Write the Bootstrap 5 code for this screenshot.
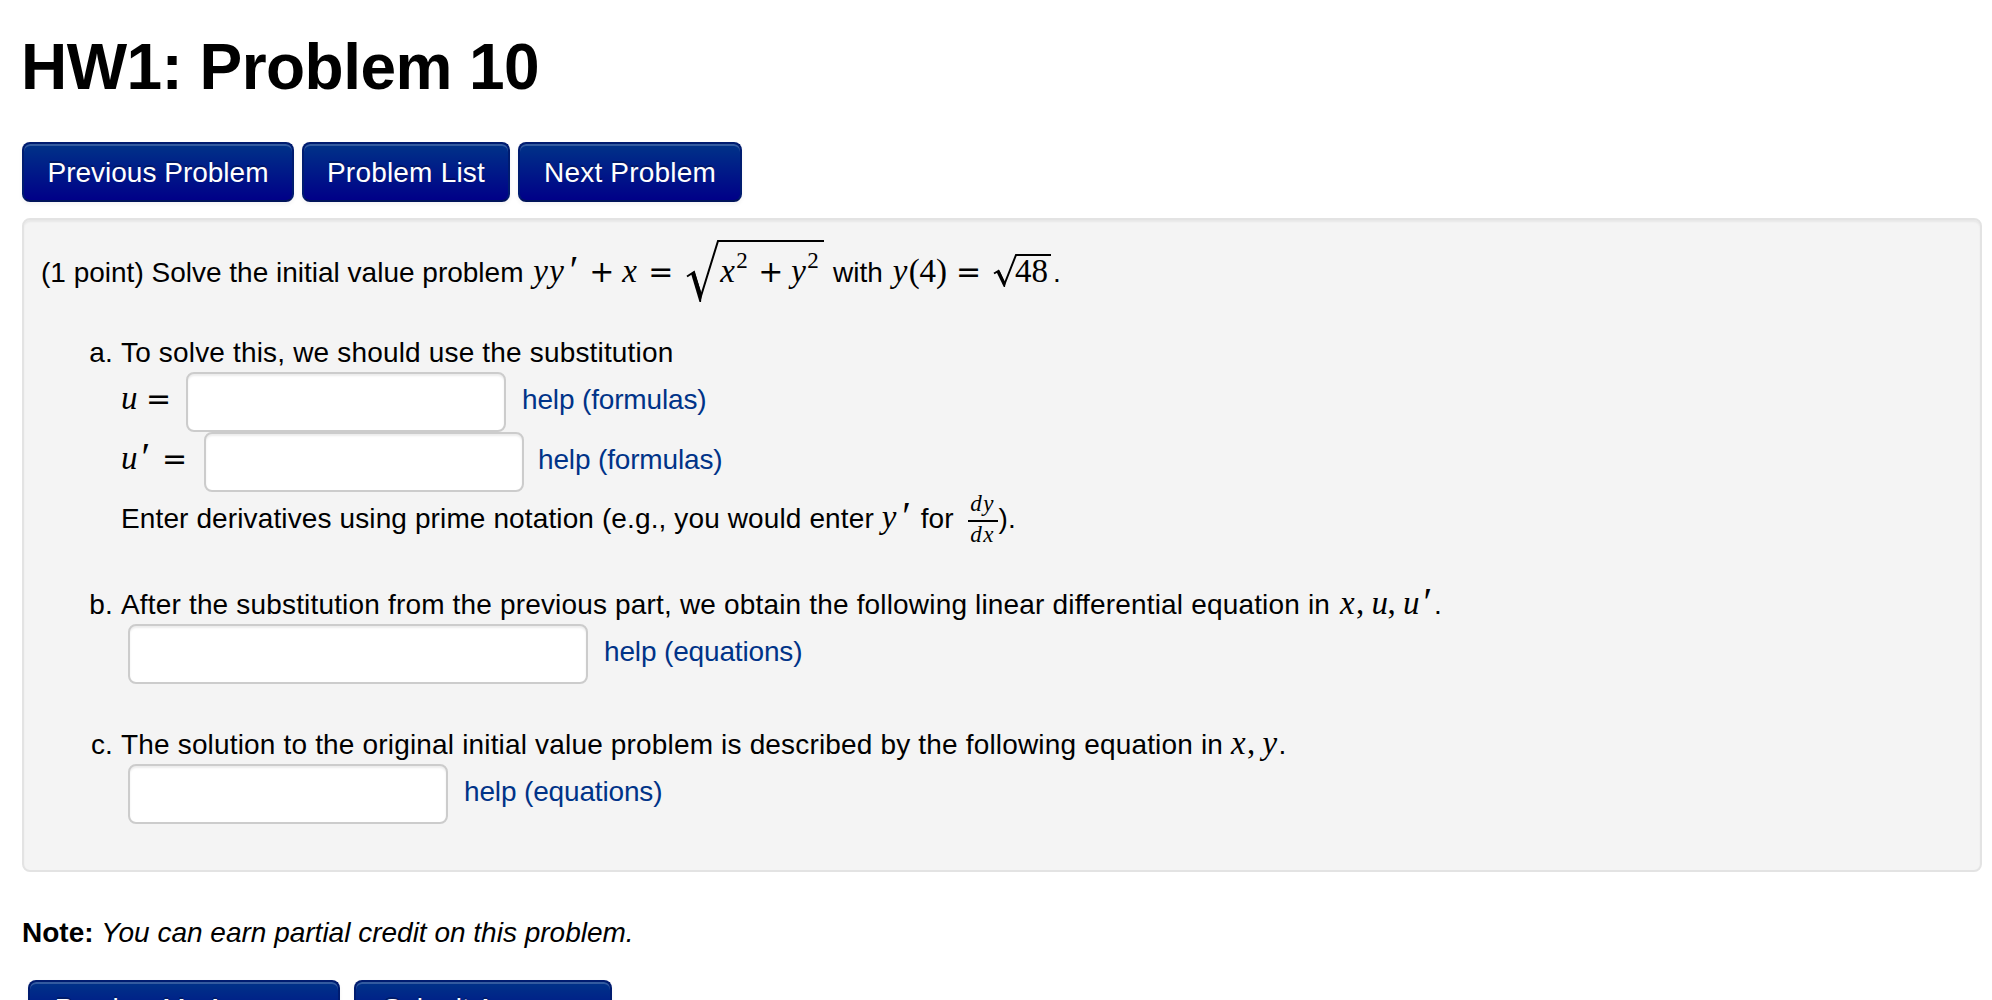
<!DOCTYPE html>
<html lang="en">
<head>
  <meta charset="utf-8">
  <title>HW1: Problem 10</title>
  <link rel="stylesheet" href="https://cdn.jsdelivr.net/npm/bootstrap@5.3.0/dist/css/bootstrap.min.css">
  <style>
    body {
      font-family: "Liberation Sans", Helvetica, Arial, sans-serif;
      font-size: 28px;
      line-height: 40px;
      color: #000;
      height: 1000px;
      overflow: hidden;
      padding: 27px 10px 0 22px;
      white-space: nowrap;
    }

    h1 {
      font-size: 64px;
      line-height: 80px;
      letter-spacing: -0.55px;
      margin: 0 0 35px -1px;
    }

    .btn-ww {
      height: 60px;
      padding: 9px 22px 7px;
      font-size: 28px;
      line-height: 40px;
      color: #fff;
      background: linear-gradient(#003388, #000088);
      border: 2px solid #001c70;
      border-bottom-color: #00145a;
      border-radius: 8px;
      box-shadow: inset 0 2px 0 rgba(255, 255, 255, 0.2), 0 2px 4px rgba(0, 0, 0, 0.05);
      text-shadow: 0 -2px 0 rgba(0, 0, 0, 0.25);
    }

    .btn-ww:hover {
      color: #fff;
      background: #000088;
    }

    .w-prev { width: 272px; }
    .w-list { width: 208px; letter-spacing: 0.2px; }
    .w-next { width: 224px; letter-spacing: 0.2px; }
    .w-preview { width: 312px; }
    .w-submit { width: 258px; }

    .problem {
      height: 654px;
      margin-top: 16px;
      padding: 33px 17px;
      background-color: #f4f4f4;
      border: 2px solid #e3e3e3;
      border-radius: 8px;
      box-shadow: inset 0 2px 2px rgba(0, 0, 0, 0.05);
    }

    .parts {
      list-style-type: lower-alpha;
      margin: 40px 0 0;
      padding-left: 80px;
    }

    .parts li {
      height: 252px;
      letter-spacing: 0.17px;
    }

    .parts li + li {
      height: 140px;
    }

    .answer-row {
      height: 60px;
      margin-top: -1px;
      line-height: 56px;
      letter-spacing: -0.15px;
    }

    .answer-row + .answer-row {
      margin-top: 0;
    }

    .answer-row.indent {
      padding-left: 7px;
    }

    .answer-row .form-control {
      width: 320px;
      height: 60px;
      border: 2px solid #ccc;
      border-radius: 8px;
      box-shadow: inset 0 2px 2px rgba(0, 0, 0, 0.075);
    }

    .answer-row .form-control.wide {
      width: 460px;
    }

    .answer-row a {
      color: #003388;
      text-decoration: none;
      margin-left: 16px;
    }

    .answer-row + .answer-row a {
      margin-left: 14px;
    }

    .hint {
      padding-top: 7px;
      letter-spacing: 0.12px;
    }

    /* math */
    .tex {
      font-family: "Liberation Serif", "Times New Roman", serif;
      font-size: 33px;
      line-height: 0;
      letter-spacing: 0;
      word-spacing: -1px;
      margin: 0 1px 0 2px;
    }

    .answer-row .tex {
      margin: 0;
    }

    .tex i {
      display: inline-block;
      width: 16px;
    }

    .tex .op {
      font-family: "DejaVu Sans", sans-serif;
      font-size: 30px;
      display: inline-block;
      width: 25px;
      margin: 0 8px 0 10px;
    }

    .tex .op.tight { margin-left: 9px; }
    .answer-row .op { margin: 0 15px 0 9px; }
    .answer-row .prime + .op { margin: 0 17px 0 11px; }

    .tex .prime {
      display: inline-block;
      width: 12px;
      margin-left: 2px;
      font-size: 40px;
      font-style: italic;
      position: relative;
      top: 1px;
    }

    .tex .pow {
      display: inline-block;
      width: 13px;
      font-size: 23px;
      position: relative;
      top: -14px;
    }

    .radical {
      display: inline-block;
      position: relative;
      padding-left: 26px;
    }

    .radical.big {
      padding-left: 39px;
      margin-right: 4px;
    }

    /* the root sign is laid over its radicand */
    .radical svg {
      position: absolute;
      left: 5px;
      top: -17px;
      overflow: visible;
    }

    .radical.big svg {
      left: 6px;
      top: -31px;
    }

    .frac {
      display: inline-flex;
      flex-direction: column;
      vertical-align: top;
      width: 30px;
      margin: -7px 1px -9px 6px;
      font-size: 23px;
      line-height: 24px;
      letter-spacing: 1.5px;
      text-align: center;
    }

    .tex.frac i {
      width: auto;
    }

    .frac i:first-child {
      padding-bottom: 4px;
      border-bottom: 2px solid #000;
    }

    .frac i:last-child {
      padding-top: 1px;
    }

    .note {
      margin: 41px 0 27px;
    }

    .submit-row {
      gap: 14px;
      padding-left: 6px;
    }

    .submit-row .btn-ww {
      padding-top: 7px;
      padding-bottom: 9px;
    }
  </style>
</head>
<body>
  <h1 class="fw-bold">HW1: Problem 10</h1>

  <div class="d-flex gap-2">
    <a href="#" class="btn btn-ww w-prev">Previous Problem</a>
    <a href="#" class="btn btn-ww w-list">Problem List</a>
    <a href="#" class="btn btn-ww w-next">Next Problem</a>
  </div>

  <div class="problem">
    <div>(1 point) Solve the initial value problem
      <span class="tex"><i>y</i><i>y</i><span class="prime">′</span><span class="op">+</span><i>x</i><span class="op">=</span><span class="radical big"><svg width="138" height="62" viewBox="0 0 138 62"><path d="M0 36.5L7 32L14 56L31 1H137" fill="none" stroke="#000" stroke-width="2"/><path d="M4 33.5L7.500 31.500L14.800 54L14 62H12.5Z"/></svg><i>x</i><span class="pow">2</span><span class="op tight">+</span><i>y</i><span class="pow">2</span></span></span>
      with
      <span class="tex"><i>y</i>(4)<span class="op tight">=</span><span class="radical"><svg width="58" height="34" viewBox="0 0 58 34"><path d="M0 19.5L4.5 17L10.5 30L22 1H57" fill="none" stroke="#000" stroke-width="2"/><path d="M2.5 18L5.500 16.500L11.500 29L11 33H9.800Z"/></svg>48</span></span><span class="ms-1">.</span>
    </div>

    <ol class="parts" type="a">
      <li>To solve this, we should use the substitution
        <div class="answer-row d-flex">
          <span><span class="tex"><i>u</i><span class="op">=</span></span></span>
          <input type="text" class="form-control">
          <a href="#">help (formulas)</a>
        </div>
        <div class="answer-row d-flex">
          <span><span class="tex"><i>u</i><span class="prime">′</span><span class="op">=</span></span></span>
          <input type="text" class="form-control">
          <a href="#">help (formulas)</a>
        </div>
        <div class="hint">Enter derivatives using prime notation (e.g., you would enter
          <span class="tex ms-0"><i>y</i><span class="prime">′</span></span>
          for
          <span class="tex frac"><i>dy</i><i>dx</i></span>).</div>
      </li>
      <li>After the substitution from the previous part, we obtain the following linear differential equation in
        <span class="tex"><i>x</i>, <i>u</i>, <i>u</i><span class="prime">′</span></span>.
        <div class="answer-row indent d-flex">
          <input type="text" class="form-control wide">
          <a href="#">help (equations)</a>
        </div>
      </li>
      <li>The solution to the original initial value problem is described by the following equation in
        <span class="tex mx-0"><i>x</i>, <i>y</i></span>.
        <div class="answer-row indent d-flex">
          <input type="text" class="form-control">
          <a href="#">help (equations)</a>
        </div>
      </li>
    </ol>
  </div>

  <p class="note"><b>Note:</b> <i>You can earn partial credit on this problem.</i></p>

  <div class="submit-row d-flex">
    <button type="button" class="btn btn-ww w-preview">Preview My Answers</button>
    <button type="button" class="btn btn-ww w-submit">Submit Answers</button>
  </div>

  <script src="https://cdn.jsdelivr.net/npm/bootstrap@5.3.0/dist/js/bootstrap.bundle.min.js"></script>
</body>
</html>
